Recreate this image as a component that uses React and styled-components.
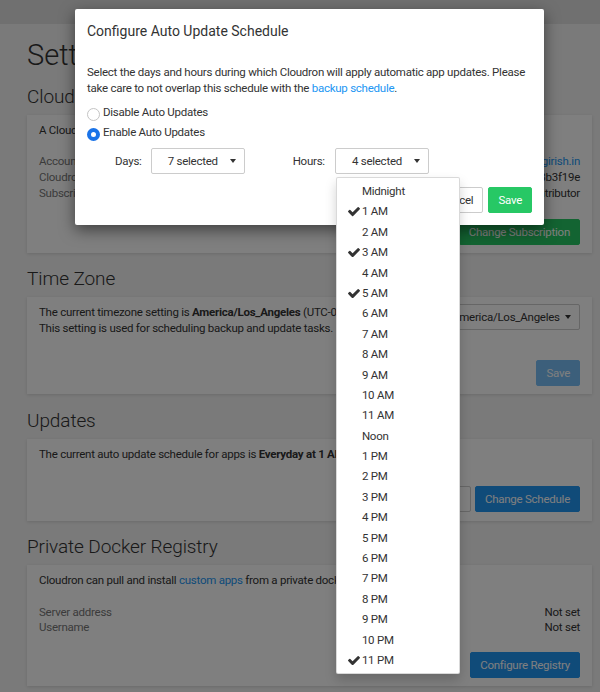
import React from 'react';
import styled, { createGlobalStyle } from 'styled-components';

const GlobalStyle = createGlobalStyle`
  * { box-sizing: border-box; }
  html, body { margin: 0; padding: 0; }
  body {
    background: #f4f4f4;
    font-family: Roboto, "Liberation Sans", sans-serif;
    font-size: 11.5px;
    letter-spacing: -0.25px;
    color: #333;
  }
`;

const Page = styled.div`
  position: relative;
  min-height: 692px;
  overflow: hidden;
`;

const Navbar = styled.div`
  height: 24px;
  background: #e0e0e0;
`;

const Content = styled.main`
  padding: 0 8px 20px 27px;
`;

const PageTitle = styled.h1`
  margin: 13px 0 0;
  font-size: 29px;
  line-height: 36px;
  font-weight: 300;
  letter-spacing: 0;
  color: #333;
`;

const Section = styled.section`
  margin-top: ${p => (p.$first ? '12px' : '14.5px')};
`;

const SectionTitle = styled.h2`
  margin: 0 0 6px;
  font-size: 19px;
  line-height: 24px;
  font-weight: 300;
  letter-spacing: -0.1px;
  color: #333;
`;

const Card = styled.div`
  background: #fff;
  padding: 8px 12px ${p => p.$pb || 8}px;
  box-shadow: 0 1px 3px rgba(0, 0, 0, 0.12);
`;

const Para = styled.p`
  margin: 0 0 ${p => p.$mb || 0}px;
  line-height: 15.7px;
  white-space: nowrap;
`;

const Link = styled.a`
  color: #2196f3;
  text-decoration: none;
`;

const InfoRow = styled.div`
  display: flex;
  justify-content: space-between;
  line-height: 15.7px;
`;

const InfoLabel = styled.span`
  color: #777;
`;

const InfoValue = styled.span`
  color: #333;
`;

const ButtonRow = styled.div`
  display: flex;
  justify-content: flex-end;
  gap: ${p => p.$gap || 4}px;
  margin-top: ${p => p.$mt || 0}px;
`;

const variants = {
  default: { bg: '#fff', border: '#ccc', color: '#333' },
  primary: { bg: '#2196f3', border: '#2196f3', color: '#fff' },
  success: { bg: '#27c865', border: '#27c865', color: '#fff' },
};

const Button = styled.button`
  height: 26px;
  padding: 0 ${p => p.$px || 9}px;
  font-family: inherit;
  font-size: 11.5px;
  letter-spacing: -0.25px;
  white-space: nowrap;
  border-radius: 2px;
  border: 1px solid ${p => variants[p.$variant || 'default'].border};
  background: ${p => variants[p.$variant || 'default'].bg};
  color: ${p => variants[p.$variant || 'default'].color};
  opacity: ${p => (p.$disabled ? 0.6 : 1)};
  cursor: pointer;
`;

const TzRow = styled.div`
  display: flex;
  justify-content: space-between;
  align-items: flex-start;
`;

const SelectBox = styled.div`
  display: flex;
  align-items: center;
  height: 26px;
  width: ${p => p.$w}px;
  margin-top: ${p => p.$mt || 0}px;
  padding: 0 8px 0 ${p => p.$pl || 10}px;
  background: #fff;
  border: 1px solid #ccc;
  border-radius: 2px;
  color: #333;
  white-space: nowrap;
`;

const Caret = styled.span`
  margin-left: auto;
  width: 0;
  height: 0;
  border-top: 4px solid #333;
  border-left: 3.5px solid transparent;
  border-right: 3.5px solid transparent;
`;

const Overlay = styled.div`
  position: absolute;
  inset: 0;
  background: rgba(0, 0, 0, 0.5);
`;

const Dialog = styled.div`
  position: absolute;
  top: 9px;
  left: 75px;
  width: 469px;
  background: #fff;
  border-radius: 2px;
  box-shadow: 0 5px 15px rgba(0, 0, 0, 0.5);
  padding: 13px 12px 12px;
`;

const DialogTitle = styled.h4`
  margin: 0;
  font-size: 14px;
  line-height: 18px;
  font-weight: 400;
  letter-spacing: 0;
  color: #333;
`;

const DialogText = styled.p`
  margin: 24.4px 0 0;
  line-height: 16px;
  color: #333;
`;

const RadioList = styled.div`
  margin-top: 5.3px;
`;

const RadioLabel = styled.label`
  display: flex;
  align-items: center;
  height: 20px;
  gap: 3px;
  color: #333;
`;

const Radio = styled.span`
  width: 13px;
  height: 13px;
  margin-top: 5px;
  border-radius: 50%;
  background: #fff;
  border: ${p => (p.$checked ? '4px solid #1a73e8' : '1px solid #c4c4c4')};
`;

const FieldRow = styled.div`
  display: flex;
  align-items: center;
  margin-top: 6.3px;
  padding-left: 28px;
`;

const FieldLabel = styled.span`
  margin: 0 ${p => p.$mr || 7}px 0 ${p => p.$ml || 0}px;
  color: #333;
`;

const SelectWrap = styled.div`
  position: relative;
`;

const Menu = styled.ul`
  position: absolute;
  top: calc(100% + 3px);
  left: 1px;
  width: 124px;
  margin: 0;
  padding: 3px 0;
  list-style: none;
  background: #fff;
  border: 1px solid rgba(0, 0, 0, 0.15);
  border-radius: 2px;
  box-shadow: 0 6px 12px rgba(0, 0, 0, 0.175);
  z-index: 5;
`;

const MenuItem = styled.li`
  position: relative;
  height: 20.4px;
  line-height: 20.4px;
  padding-left: 25px;
  color: #333;
`;

const CheckIcon = styled.svg`
  position: absolute;
  left: 11px;
  top: 6px;
  width: 12px;
  height: 9.2px;
`;

const DialogFooter = styled.div`
  display: flex;
  justify-content: flex-end;
  gap: 5px;
  margin-top: 13px;
`;

const hours = [
  'Midnight',
  ...Array.from({ length: 11 }, (_, i) => `${i + 1} AM`),
  'Noon',
  ...Array.from({ length: 11 }, (_, i) => `${i + 1} PM`),
];
const selectedHours = new Set(['1 AM', '3 AM', '5 AM', '11 PM']);

const Check = () => (
  <CheckIcon viewBox="121 334 1550 1188" aria-hidden="true">
    <path
      fill="#333"
      d="M1671 566q0 40-28 68l-724 724-136 136q-28 28-68 28t-68-28l-136-136-362-362q-28-28-28-68t28-68l136-136q28-28 68-28t68 28l294 295 656-657q28-28 68-28t68 28l136 136q28 28 28 68z"
    />
  </CheckIcon>
);

export default function App() {
  return (
    <Page>
      <GlobalStyle />
      <Navbar />
      <Content>
        <PageTitle>Settings</PageTitle>

        <Section $first>
          <SectionTitle>Cloudron</SectionTitle>
          <Card $pb={8}>
            <Para $mb={15.7}>A Cloudron subscription is required for automatic updates and support.</Para>
            <InfoRow>
              <InfoLabel>Account</InfoLabel>
              <Link href="#">girish@girish.in</Link>
            </InfoRow>
            <InfoRow>
              <InfoLabel>Cloudron ID</InfoLabel>
              <InfoValue>a9f43c28b3f19e</InfoValue>
            </InfoRow>
            <InfoRow>
              <InfoLabel>Subscription</InfoLabel>
              <InfoValue>Contributor</InfoValue>
            </InfoRow>
            <ButtonRow $mt={17}>
              <Button $variant="success">Change Subscription</Button>
            </ButtonRow>
          </Card>
        </Section>

        <Section>
          <SectionTitle>Time Zone</SectionTitle>
          <Card $pb={8}>
            <TzRow>
              <div>
                <Para>
                  The current timezone setting is <b>America/Los_Angeles</b> (UTC-07:00).
                </Para>
                <Para>This setting is used for scheduling backup and update tasks.</Para>
              </div>
              <SelectBox $w={139} $mt={-1} $pl={10}>
                America/Los_Angeles <Caret />
              </SelectBox>
            </TzRow>
            <ButtonRow $mt={23.8}>
              <Button $variant="primary" $disabled>Save</Button>
            </ButtonRow>
          </Card>
        </Section>

        <Section>
          <SectionTitle>Updates</SectionTitle>
          <Card $pb={9}>
            <Para>
              The current auto update schedule for apps is <b>Everyday at 1 AM, 3 AM, 5 AM, 11 PM</b>
            </Para>
            <ButtonRow $mt={23.4}>
              <Button $px={14}>Check Now</Button>
              <Button $variant="primary">Change Schedule</Button>
            </ButtonRow>
          </Card>
        </Section>

        <Section>
          <SectionTitle>Private Docker Registry</SectionTitle>
          <Card $pb={8}>
            <Para $mb={15.7}>
              Cloudron can pull and install <Link href="#">custom apps</Link> from a private docker registry.
            </Para>
            <InfoRow>
              <InfoLabel>Server address</InfoLabel>
              <InfoValue>Not set</InfoValue>
            </InfoRow>
            <InfoRow>
              <InfoLabel>Username</InfoLabel>
              <InfoValue>Not set</InfoValue>
            </InfoRow>
            <ButtonRow $mt={16}>
              <Button $variant="primary">Configure Registry</Button>
            </ButtonRow>
          </Card>
        </Section>
      </Content>

      <Overlay />

      <Dialog role="dialog">
        <DialogTitle>Configure Auto Update Schedule</DialogTitle>
        <DialogText>
          Select the days and hours during which Cloudron will apply automatic app updates. Please
          take care to not overlap this schedule with the <Link href="#">backup schedule</Link>.
        </DialogText>
        <RadioList>
          <RadioLabel>
            <Radio />
            Disable Auto Updates
          </RadioLabel>
          <RadioLabel>
            <Radio $checked />
            Enable Auto Updates
          </RadioLabel>
        </RadioList>
        <FieldRow>
          <FieldLabel $mr={9}>Days:</FieldLabel>
          <SelectBox $w={94} $pl={16}>
            7 selected <Caret />
          </SelectBox>
          <FieldLabel $ml={48} $mr={10}>Hours:</FieldLabel>
          <SelectWrap>
            <SelectBox $w={94} $pl={16}>
              4 selected <Caret />
            </SelectBox>
            <Menu>
              {hours.map(h => (
                <MenuItem key={h}>
                  {selectedHours.has(h) && <Check />}
                  {h}
                </MenuItem>
              ))}
            </Menu>
          </SelectWrap>
        </FieldRow>
        <DialogFooter>
          <Button>Cancel</Button>
          <Button $variant="success">Save</Button>
        </DialogFooter>
      </Dialog>
    </Page>
  );
}
